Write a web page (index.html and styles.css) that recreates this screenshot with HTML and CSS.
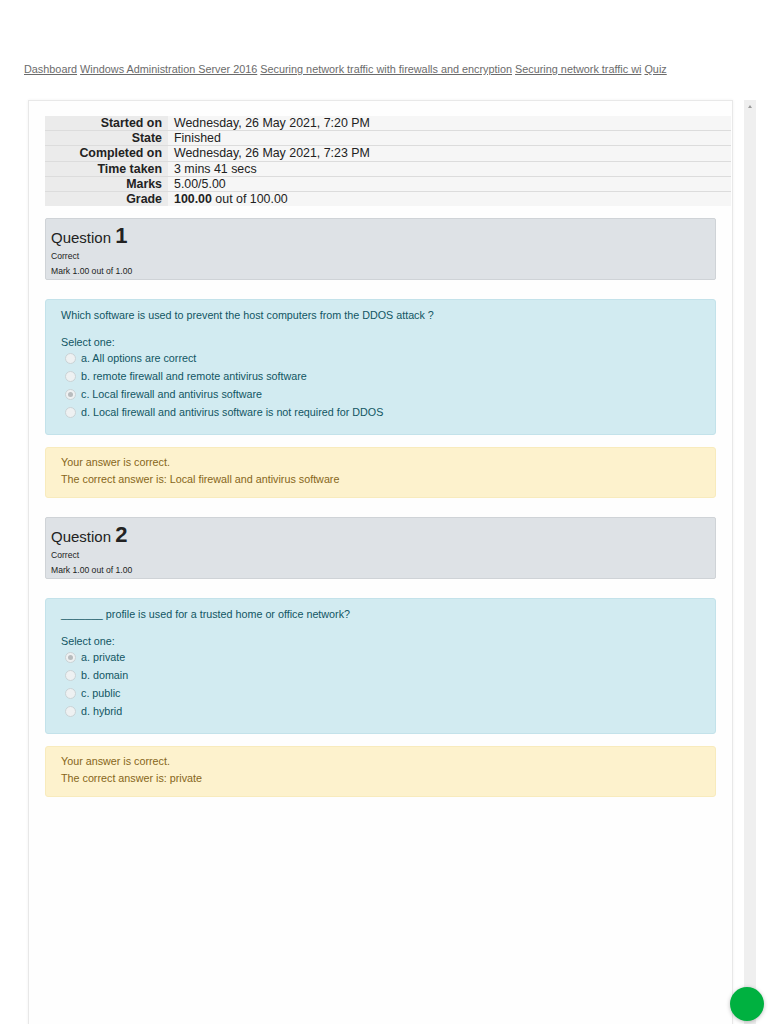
FILE: index.html
```html
<!DOCTYPE html>
<html lang="en">
<head>
  <meta charset="UTF-8">
  <meta name="viewport" content="width=device-width, initial-scale=1">
  <title>Securing network traffic wi Quiz</title>
  <link rel="stylesheet" href="styles.css">
</head>
<body>

<div class="crumbs">
  <a href="#">Dashboard</a>
  <a href="#">Windows Administration Server 2016</a>
  <a href="#">Securing network traffic with firewalls and encryption</a>
  <a href="#">Securing network traffic wi</a>
  <a href="#">Quiz</a>
</div>

<div class="viewer">
  <div class="page">
    <table class="summary">
      <tr><th>Started on</th><td>Wednesday, 26 May 2021, 7:20 PM</td></tr>
      <tr><th>State</th><td>Finished</td></tr>
      <tr><th>Completed on</th><td>Wednesday, 26 May 2021, 7:23 PM</td></tr>
      <tr><th>Time taken</th><td>3 mins 41 secs</td></tr>
      <tr><th>Marks</th><td>5.00/5.00</td></tr>
      <tr><th>Grade</th><td><b>100.00</b> out of 100.00</td></tr>
    </table>

    <div class="que">
      <div class="info">
        <h3>Question <span class="qno">1</span></h3>
        <div class="state">Correct</div>
        <div class="grade">Mark 1.00 out of 1.00</div>
      </div>
      <div class="formulation">
        <p class="qtext">Which software is used to prevent the host computers from the DDOS attack ?</p>
        <div class="prompt">Select one:</div>
        <div class="answer">
          <div class="opt"><span class="radio"></span>a. All options are correct</div>
          <div class="opt"><span class="radio"></span>b. remote firewall and remote antivirus software</div>
          <div class="opt"><span class="radio checked"></span>c. Local firewall and antivirus software</div>
          <div class="opt"><span class="radio"></span>d. Local firewall and antivirus software is not required for DDOS</div>
        </div>
      </div>
      <div class="feedback">
        <div>Your answer is correct.</div>
        <div>The correct answer is: Local firewall and antivirus software</div>
      </div>
    </div>

    <div class="que">
      <div class="info">
        <h3>Question <span class="qno">2</span></h3>
        <div class="state">Correct</div>
        <div class="grade">Mark 1.00 out of 1.00</div>
      </div>
      <div class="formulation">
        <p class="qtext"><span class="blank">_______</span> profile is used for a trusted home or office network?</p>
        <div class="prompt">Select one:</div>
        <div class="answer">
          <div class="opt"><span class="radio checked"></span>a. private</div>
          <div class="opt"><span class="radio"></span>b. domain</div>
          <div class="opt"><span class="radio"></span>c. public</div>
          <div class="opt"><span class="radio"></span>d. hybrid</div>
        </div>
      </div>
      <div class="feedback">
        <div>Your answer is correct.</div>
        <div>The correct answer is: private</div>
      </div>
    </div>
  </div>

  <div class="scrolltrack"><span class="arrow"></span></div>
</div>

<a class="fab" href="#"></a>

</body>
</html>
```

FILE: styles.css
```css
html, body {
  overflow: hidden;
}
body {
  font-family: "Liberation Sans", Arial, sans-serif;
  background: #fff;
  margin: 0;
  padding: 0;
  color: #333;
}

.crumbs {
  padding: 62px 0 0 24px;
  font-size: 10.85px;
  line-height: 14px;
}
.crumbs a {
  color: #6b6b6b;
  text-decoration: underline;
}

.viewer {
  display: flex;
  margin: 24px 0 0 28px;
}
.page {
  width: 687px;
  height: 920px;
  padding: 15px 0 0 16px;
  border: 1px solid #e8e8e8;
  box-shadow: 0 0 3px rgba(0,0,0,0.06);
  background: #fefefe;
}
.scrolltrack {
  width: 12px;
  height: 924px;
  margin-left: 11px;
  background: #efefef;
  display: flex;
  justify-content: center;
}
.scrolltrack .arrow {
  margin-top: 5px;
  width: 0;
  height: 0;
  border-left: 2px solid transparent;
  border-right: 2px solid transparent;
  border-bottom: 3px solid #9a9a9a;
}

/* attempt summary */
.summary {
  width: 686px;
  border-collapse: collapse;
  font-size: 12.4px;
  color: #222;
}
.summary th, .summary td {
  padding: 0;
  height: 14.2px;
  line-height: 14px;
  border-top: 1px solid #dcdcdc;
}
.summary tr:first-child th, .summary tr:first-child td {
  border-top: 0;
}
.summary th {
  width: 117px;
  text-align: right;
  padding-right: 6px;
  background: #ebebeb;
  font-weight: bold;
}
.summary td {
  padding-left: 6px;
  background: #f6f6f6;
}

/* questions */
.que {
  width: 671px;
  margin-top: 12px;
}
.que + .que {
  margin-top: 19px;
}
.info {
  height: 60px;
  padding: 0 5px;
  background: #dee2e6;
  border: 1px solid #cfd3d7;
  border-radius: 2px;
  color: #222;
}
.info h3 {
  margin: 6px 0 0;
  font-size: 15px;
  font-weight: normal;
  line-height: 22px;
}
.info .qno {
  font-size: 22px;
  font-weight: bold;
}
.info .state, .info .grade {
  font-size: 8.6px;
  line-height: 15px;
}

.formulation {
  margin-top: 19px;
  height: 120px;
  padding: 8px 15px 6px;
  background: #d2ebf1;
  border: 1px solid #c3e2ea;
  border-radius: 3px;
  color: #115663;
  font-size: 10.75px;
}
.qtext {
  margin: 0;
  line-height: 15px;
}
.prompt {
  margin-top: 13px;
  line-height: 13px;
}
.answer {
  padding-left: 4px;
}
.opt {
  display: flex;
  align-items: center;
  height: 18px;
}
.radio {
  width: 9px;
  height: 9px;
  margin-right: 5px;
  border-radius: 50%;
  border: 1px solid #cad3d6;
  background: #eef1f2;
  display: flex;
  align-items: center;
  justify-content: center;
}
.radio.checked::after {
  content: "";
  width: 5px;
  height: 5px;
  border-radius: 50%;
  background: #b8bcbe;
}

.feedback {
  margin-top: 12px;
  height: 37px;
  padding: 6px 15px 6px;
  background: #fdf2cd;
  border: 1px solid #f8ebbd;
  border-radius: 3px;
  color: #86661a;
  font-size: 10.75px;
  line-height: 17px;
}

.fab {
  position: absolute;
  left: 730px;
  top: 987px;
  width: 34px;
  height: 34px;
  border-radius: 50%;
  background: #00b140;
  box-shadow: 0 1px 4px rgba(0,0,0,0.25);
}
```
